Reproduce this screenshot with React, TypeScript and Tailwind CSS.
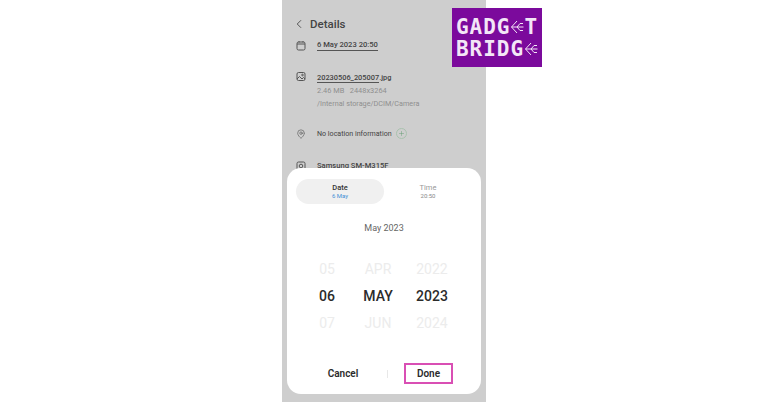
import React from 'react';
import {ChevronLeft, MapPin, Plus} from 'lucide-react';

const Arrow: React.FC<{className?: string}> = ({className}) => (
  <svg viewBox="0 0 14 14" className={className} fill="none" stroke="currentColor" strokeWidth="1">
    <path d="M13.5 7H1.5M7 1 1.5 7 7 13M7 7l3-3.5h3M7 7l3 3.5h3" />
  </svg>
);

const RowIcon: React.FC<{children: React.ReactNode}> = ({children}) => (
  <svg viewBox="0 0 10 10" className="h-[10px] w-[10px] shrink-0 text-[#555]" fill="none" stroke="currentColor" strokeWidth="1">
    {children}
  </svg>
);

const Wheel: React.FC<{items: string[]; className: string}> = ({items, className}) => (
  <div className={`flex flex-col items-center gap-[9px] ${className}`}>
    <span className="h-[18px] text-[14px] leading-[18px] text-[#ececec]">{items[0]}</span>
    <span className="h-[18px] text-[14px] leading-[18px] font-medium text-[#2b2b2b]">{items[1]}</span>
    <span className="h-[18px] text-[14px] leading-[18px] text-[#ececec]">{items[2]}</span>
  </div>
);

const App: React.FC = () => {
  return (
    <div className="relative flex h-[402px] w-[768px] justify-center overflow-hidden bg-white font-['Roboto',sans-serif]">
      <div className="relative h-full w-[204px] bg-[#cecece] text-[#444]">
        <div className="flex items-center gap-[4px] pl-[10px] pt-[15px]">
          <ChevronLeft size={14} strokeWidth={1.5} className="text-[#444]" />
          <span className="text-[11.5px] font-medium leading-[18px]">Details</span>
        </div>
        <div className="flex flex-col pl-[14px] pt-[7px]">
          <div className="flex items-center gap-[11px]">
            <RowIcon>
              <rect x="1" y="1" width="8" height="8" rx="1.5" />
              <path d="M1 3h8M3 0v1.5M7 0v1.5" />
            </RowIcon>
            <span className="border-b border-[#555] text-[7.6px] font-medium leading-[10px]">6 May 2023 20:50</span>
          </div>
          <div className="mt-[21px] flex gap-[11px]">
            <RowIcon>
              <rect x="1" y="0.5" width="8" height="8" rx="1.5" />
              <path d="m1 7 2.5-2.5L6 7l1.5-1.5L9 7" />
              <circle cx="6.5" cy="3" r="0.8" />
            </RowIcon>
            <div className="flex flex-col">
              <span className="text-[7.4px] font-medium leading-[11px]">
                <span className="border-b border-[#555]">20230506_205007</span>.jpg
              </span>
              <span className="mt-[3px] text-[7.4px] leading-[10px] text-[#8f8f8f]">2.46 MB&nbsp;&nbsp;&nbsp;2448x3264</span>
              <span className="mt-[3px] text-[7.25px] leading-[10px] text-[#8f8f8f]">/Internal storage/DCIM/Camera</span>
            </div>
          </div>
          <div className="mt-[19px] flex items-center gap-[11px]">
            <MapPin size={10} strokeWidth={1.5} className="text-[#555]" />
            <span className="text-[7.1px] leading-[10px]">No location information</span>
            <span className="-ml-[7px] flex h-[11px] w-[11px] items-center justify-center rounded-full border border-[#a9c2ae] text-[#5d9a6c]">
              <Plus size={7} strokeWidth={1.5} />
            </span>
          </div>
          <div className="mt-[22px] flex items-center gap-[11px]">
            <RowIcon>
              <rect x="1" y="1" width="8" height="8" rx="1.5" />
              <circle cx="5" cy="5" r="1.8" />
            </RowIcon>
            <span className="text-[7.6px] font-medium leading-[10px]">Samsung SM-M315F</span>
          </div>
        </div>

        <div className="absolute bottom-[8px] left-[5px] flex h-[226px] w-[194px] flex-col rounded-[14px] bg-white">
          <div className="flex px-[9px] pt-[11px]">
            <div className="flex h-[25px] w-[88px] flex-col items-center justify-center rounded-full bg-[#f0f0f0]">
              <span className="text-[7.5px] font-medium leading-[9px] text-[#333]">Date</span>
              <span className="text-[6px] leading-[8px] text-[#3f8fd6]">6 May</span>
            </div>
            <div className="flex h-[25px] flex-1 flex-col items-center justify-center">
              <span className="text-[7.5px] leading-[9px] text-[#999]">Time</span>
              <span className="text-[6px] leading-[8px] text-[#888]">20:50</span>
            </div>
          </div>
          <p className="mt-[18px] text-center text-[9px] leading-[12px] text-[#666]">May 2023</p>
          <div className="mt-[26px] flex pl-[15px]">
            <Wheel items={['05', '06', '07']} className="w-[50px]" />
            <Wheel items={['APR', 'MAY', 'JUN']} className="w-[52px]" />
            <Wheel items={['2022', '2023', '2024']} className="w-[56px]" />
          </div>
          <div className="mt-[31px] flex items-center">
            <span className="w-[100px] pl-[12px] text-center text-[10px] font-semibold text-[#2b2b2b]">Cancel</span>
            <div className="h-[8px] w-px bg-[#e8e8e8]" />
            <span className="ml-[16px] flex h-[21px] w-[49px] items-center justify-center border-2 border-[#d94fb4] text-[10px] font-semibold text-[#2b2b2b]">Done</span>
          </div>
        </div>
      </div>

      <div className="absolute left-[452px] top-[8px] flex h-[59px] w-[90px] flex-col items-center justify-center bg-[#7b0a9c] font-['DejaVu_Sans_Mono',monospace] text-[21px] font-bold tracking-[1px] text-[#f3e6f7]">
        <div className="flex h-[22px] items-center leading-[22px]">
          <span className="inline-block h-[22px] overflow-hidden">GADG</span>
          <Arrow className="h-[14px] w-[14px]" />
          <span className="inline-block h-[22px] overflow-hidden">T</span>
        </div>
        <div className="flex h-[22px] items-center leading-[22px]">
          <span className="inline-block h-[22px] overflow-hidden">BRIDG</span>
          <Arrow className="h-[14px] w-[14px]" />
        </div>
      </div>
    </div>
  );
};

export default App;
